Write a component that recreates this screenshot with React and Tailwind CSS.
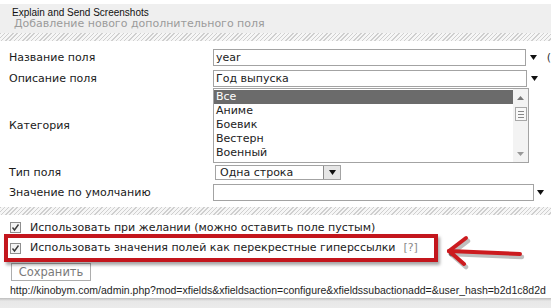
import React from "react";

const hatch =
  "bg-[repeating-linear-gradient(135deg,#cfcfcf_0px,#cfcfcf_1px,#f6f6f6_1px,#f6f6f6_3px)]";

const Caret = ({ className = "" }) => (
  <svg width="7" height="5" viewBox="0 0 7 5" className={className}>
    <path d="M0 0h7L3.5 5z" fill="#111" />
  </svg>
);

const Check = () => (
  <span className="w-[11px] h-[11px] border border-[#8f8f8f] bg-[#f4f4f4] flex items-center justify-center shrink-0">
    <svg width="9" height="9" viewBox="0 0 9 9">
      <path d="M1.5 4.5 L3.5 7 L7.5 1.5" stroke="#3a3a3a" strokeWidth="1.4" fill="none" />
    </svg>
  </span>
);

const Row = ({ label, children, className = "" }) => (
  <div className={`flex items-center ${className}`}>
    <div className="w-[204px] shrink-0 text-[#1a1a1a]">{label}</div>
    {children}
  </div>
);

const categories = ["Все", "Аниме", "Боевик", "Вестерн", "Военный"];

export default function App() {
  return (
    <div className="w-[551px] h-[308px] overflow-hidden bg-white relative font-['DejaVu_Sans',sans-serif] text-[11px] leading-[14px]">
      {/* header */}
      <div className="mt-[4px] h-[29px] bg-[#efefef] pl-[12px] pt-[3px]">
        <div className="font-['Liberation_Sans',sans-serif] text-[10px] leading-[11px] text-[#111]">
          Explain and Send Screenshots
        </div>
        <div className="pl-[2px] text-[11px] leading-[12px] text-[#9b9b9b]">
          Добавление нового дополнительного поля
        </div>
      </div>
      <div className={`h-[8px] ${hatch}`} />

      {/* form */}
      <div className="pl-[9px] pt-[8px]">
        <Row label="Название поля">
          <div className="w-[314px] h-[17px] border border-[#a3a3a3] px-[2px] leading-[15px] text-[#222]">
            year
          </div>
          <Caret className="ml-[4px]" />
          <span className="ml-[10px] text-[#333]">(</span>
        </Row>
        <Row label="Описание поля" className="mt-[4px]">
          <div className="w-[314px] h-[17px] border border-[#a3a3a3] px-[2px] leading-[15px] text-[#222]">
            Год выпуска
          </div>
          <Caret className="ml-[4px]" />
        </Row>
        <Row label="Категория" className="mt-[1px]">
          <div className="w-[316px] h-[75px] border border-[#a3a3a3] flex">
            <div className="flex-1 pt-[1px]">
              {categories.map((c, i) => (
                <div
                  key={c}
                  className={`h-[14px] px-[2px] leading-[14px] ${
                    i === 0 ? "bg-[#6b6b6b] text-white" : "text-[#222]"
                  }`}
                >
                  {c}
                </div>
              ))}
            </div>
            <div className="w-[15px] bg-[#f3f3f3] flex flex-col items-center pt-[7px]">
              <svg width="7" height="4" viewBox="0 0 7 4">
                <path d="M0 4h7L3.5 0z" fill="#777" />
              </svg>
              <div className="mt-[7px] w-[12px] h-[14px] border border-[#a8a8a8] bg-[#f8f8f8] flex flex-col items-center justify-center gap-[2px]">
                <span className="w-[6px] h-px bg-[#888]" />
                <span className="w-[6px] h-px bg-[#888]" />
                <span className="w-[6px] h-px bg-[#888]" />
              </div>
              <div className="flex-1" />
              <svg width="7" height="4" viewBox="0 0 7 4" className="mb-[6px]">
                <path d="M0 0h7L3.5 4z" fill="#999" />
              </svg>
            </div>
          </div>
        </Row>
        <Row label="Тип поля" className="mt-[2px]">
          <div className="ml-[2px] w-[126px] h-[15px] border border-[#a3a3a3] flex">
            <div className="flex-1 pl-[4px] leading-[13px] text-[#222]">Одна строка</div>
            <div className="w-[17px] border-l border-[#8a8a8a] bg-[#e6e6e6] flex items-center justify-center">
              <Caret />
            </div>
          </div>
        </Row>
        <Row label="Значение по умолчанию" className="mt-[4px]">
          <div className="w-[321px] h-[17px] border border-[#a3a3a3]" />
          <Caret className="ml-[3px]" />
        </Row>
      </div>

      <div className={`mt-[6px] h-[8px] ${hatch}`} />

      {/* checkboxes */}
      <div className="pl-[10px] pt-[6px]">
        <div className="flex items-center gap-[9px] h-[13px] text-[#222]">
          <Check />
          <span>Использовать при желании (можно оставить поле пустым)</span>
        </div>
        <div className="flex items-center gap-[9px] h-[14px] mt-[7px] text-[#222]">
          <Check />
          <span>
            Использовать значения полей как перекрестные гиперссылки
            <span className="ml-[8px] text-[#8a8a8a]">[?]</span>
          </span>
        </div>
        <div className="mt-[8px] ml-[1px] w-[80px] h-[18px] border border-[#adadad] flex items-center justify-center text-[#7a7a7a] text-[11.5px]">
          Сохранить
        </div>
      </div>

      {/* status url */}
      <div className="mt-[2px] pl-[10px] h-[14px] whitespace-nowrap font-['Liberation_Sans',sans-serif] text-[10.5px] leading-[14px] text-[#1e1e1e]">
        http://kinobym.com/admin.php?mod=xfields&amp;xfieldsaction=configure&amp;xfieldssubactionadd=&amp;user_hash=b2d1c8d2d
      </div>
      <div className="mt-[1px] h-[20px] bg-[linear-gradient(#bdbdbd,#e8e8e8_3px,#f0f0f0)]" />

      {/* annotation overlay */}
      <div className="absolute left-[4px] top-[234px] w-[434px] h-[28px] border-[4px] border-[#c3161d] shadow-[2px_3px_3px_rgba(0,0,0,0.35)]" />
      <svg
        className="absolute left-[440px] top-[230px]"
        width="90"
        height="45"
        viewBox="0 0 90 45"
      >
        <g stroke="rgba(0,0,0,0.25)" strokeWidth="4.5" strokeLinecap="round" fill="none" transform="translate(2 3)">
          <path d="M9 21 L80 24" />
          <path d="M9 21 L26 8" />
          <path d="M9 21 L24 34" />
        </g>
        <g stroke="#cc1b1f" strokeWidth="4" strokeLinecap="round" fill="none">
          <path d="M9 21 L80 24" />
          <path d="M9 21 L26 8" />
          <path d="M9 21 L24 34" />
        </g>
      </svg>
    </div>
  );
}
